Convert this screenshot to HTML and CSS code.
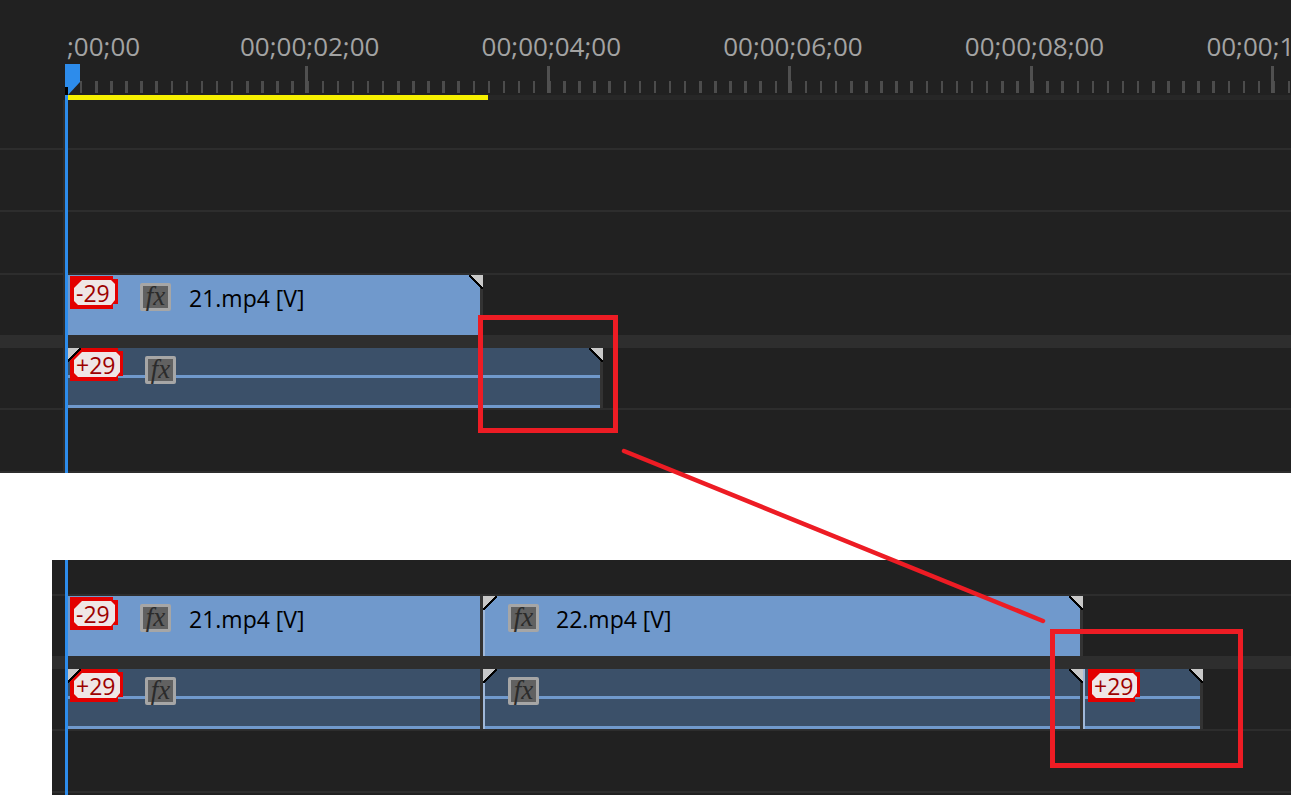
FILE: index.html
```html
<!DOCTYPE html>
<html lang="en">
<head>
  <meta charset="UTF-8">
  <meta name="viewport" content="width=device-width, initial-scale=1.0">
  <title>Timeline</title>
  <link rel="stylesheet" href="styles.css">
</head>
<body>

  <section class="panel panel-top">
    <div class="ruler">
      <div class="labels">
        <span class="label label-first">;00;00</span>
        <span class="label">00;00;02;00</span>
        <span class="label">00;00;04;00</span>
        <span class="label">00;00;06;00</span>
        <span class="label">00;00;08;00</span>
        <span class="label label-last">00;00;1</span>
      </div>
      <div class="ticks"></div>
      <div class="ticks-major"></div>
      <div class="render-band"></div>
      <div class="render-bar"></div>
    </div>

    <div class="track track-a"></div>
    <div class="track track-b"></div>
    <div class="track track-c"></div>

    <div class="clips">
      <div class="clip video w-413">
        <span class="badge badge-minus">-29</span>
        <span class="fx fx-first">fx</span>
        <span class="name">21.mp4 [V]</span>
        <i class="corner right"></i>
      </div>
      <div class="edge"></div>
    </div>
    <div class="divider"></div>
    <div class="clips">
      <div class="clip audio w-533">
        <span class="badge badge-plus">+29</span>
        <span class="fx fx-audio">fx</span>
        <i class="corner left"></i>
        <i class="corner right"></i>
      </div>
      <div class="edge"></div>
    </div>
    <div class="track track-d"></div>

    <div class="gutter"></div>
    <div class="playhead"></div>
    <div class="head"></div>
    <div class="head-tip"></div>
  </section>

  <section class="panel panel-bottom">
    <div class="track track-e"></div>

    <div class="clips">
      <div class="clip video w-413">
        <span class="badge badge-minus">-29</span>
        <span class="fx fx-first">fx</span>
        <span class="name">21.mp4 [V]</span>
      </div>
      <div class="edge"></div>
      <div class="clip video w-597 join">
        <span class="fx fx-second">fx</span>
        <span class="name name-second">22.mp4 [V]</span>
        <i class="corner left"></i>
        <i class="corner right"></i>
      </div>
      <div class="edge"></div>
    </div>
    <div class="divider"></div>
    <div class="clips">
      <div class="clip audio w-413">
        <span class="badge badge-plus">+29</span>
        <span class="fx fx-audio">fx</span>
        <i class="corner left"></i>
      </div>
      <div class="edge"></div>
      <div class="clip audio w-597 join">
        <span class="fx fx-second">fx</span>
        <i class="corner left"></i>
        <i class="corner right"></i>
      </div>
      <div class="edge"></div>
      <div class="clip audio w-117 join">
        <span class="badge badge-plus badge-last">+29</span>
        <i class="corner right"></i>
      </div>
      <div class="edge"></div>
    </div>
    <div class="track track-f"></div>

    <div class="playhead"></div>
  </section>

  <div class="callout callout-top"></div>
  <div class="callout callout-bottom"></div>
  <svg class="pointer" width="1291" height="795" viewBox="0 0 1291 795">
    <line x1="624" y1="451" x2="1043" y2="621" stroke="#ed1c24" stroke-width="4.5" stroke-linecap="round"/>
  </svg>

</body>
</html>
```

FILE: styles.css
```css
body {
  margin: 0;
  width: 1291px;
  height: 795px;
  overflow: hidden;
  position: relative;
  background: #fff;
  font-family: "Open Sans", sans-serif;
}
.panel {
  position: relative;
  overflow: hidden;
  background: #212121;
}
.panel-top {
  height: 473px;
}
.panel-bottom {
  height: 235px;
  margin: 87px 0 0 52px;
}

/* ruler */
.ruler {
  height: 100px;
  position: relative;
  overflow: hidden;
}
.labels {
  display: flex;
  padding: 29px 0 0 67px;
  font-size: 26px;
  line-height: 34px;
  color: #a3a3a3;
  white-space: nowrap;
}
.label {
  flex: 0 0 241.6px;
}
.label-first {
  flex-basis: 173px;
}
.label-last {
  flex-basis: auto;
}
.ticks {
  position: absolute;
  left: 80px;
  right: 0;
  top: 81px;
  height: 12px;
  background: repeating-linear-gradient(90deg, #4c4c4c 0 2.5px, transparent 2.5px 15.1px);
}
.ticks-major {
  position: absolute;
  left: 305px;
  right: 0;
  top: 66px;
  height: 27px;
  background: repeating-linear-gradient(90deg, #505050 0 3px, transparent 3px 241.6px);
}
.render-band {
  position: absolute;
  left: 68px;
  right: 0;
  top: 95px;
  height: 5px;
  background: #272727;
}
.render-bar {
  position: absolute;
  left: 68px;
  top: 95px;
  width: 420px;
  height: 5px;
  background: #f6f000;
}

/* tracks */
.track {
  border-bottom: 2px solid #2d2d2d;
  box-sizing: border-box;
}
.track-a { height: 50px; }
.track-b { height: 62px; }
.track-c { height: 63px; }
.track-d { height: 65px; border-top: 2px solid #2d2d2d; }
.track-e { height: 36px; }
.track-f { height: 64px; border-top: 2px solid #2d2d2d; }

.divider {
  height: 13px;
  background: #2e2e2e;
}
.clips {
  display: flex;
  height: 60px;
  padding-left: 67px;
}
.panel-bottom .clips {
  padding-left: 15px;
}
.clip {
  position: relative;
  display: flex;
  align-items: flex-start;
  box-sizing: border-box;
  height: 60px;
}
.video {
  background: #7099cc;
}
.audio {
  background:
    linear-gradient(#7099cc, #7099cc) 0 27px / 100% 3px no-repeat,
    linear-gradient(#7099cc, #7099cc) 0 57px / 100% 3px no-repeat,
    #3b5069;
}
.join {
  border-left: 2px solid #a0b8d8;
}
.w-413 { width: 413px; }
.w-533 { width: 533px; }
.w-597 { width: 597px; }
.w-117 { width: 117px; }
.edge {
  flex: 0 0 3px;
  background: #333;
}

/* badges on the clips */
.badge {
  position: relative;
  z-index: 0;
  box-sizing: border-box;
  height: 33px;
  margin: 0 0 0 3px;
  padding: 5px 0 0 6px;
  background: #e30000;
  font-size: 23px;
  line-height: 24px;
  color: #9c0000;
  clip-path: polygon(0 0, calc(100% - 5px) 0, calc(100% - 5px) 3px, 100% 3px, 100% calc(100% - 5px), calc(100% - 5px) calc(100% - 5px), calc(100% - 5px) 100%, 0 100%);
}
.badge::before {
  content: "";
  position: absolute;
  z-index: -1;
  left: 4px;
  top: 4px;
  right: 3px;
  bottom: 4px;
  background: #efe6e6;
  clip-path: polygon(8px 0, calc(100% - 4px) 0, 100% 4px, 100% calc(100% - 5px), calc(100% - 4px) 100%, 4px 100%, 0 calc(100% - 4px), 0 8px);
}
.badge-minus {
  width: 48px;
  margin-top: 1px;
}
.badge-plus {
  width: 53px;
}
.badge-last {
  width: 52px;
}
.fx {
  box-sizing: border-box;
  width: 31px;
  height: 28px;
  background: #616161;
  border: 3px solid #a6a6a6;
  border-radius: 2px;
  font-family: "Liberation Serif", serif;
  font-style: italic;
  font-size: 27px;
  line-height: 21px;
  text-align: center;
  color: #2b2b2b;
}
.fx-first {
  margin: 8px 0 0 22px;
}
.fx-audio {
  margin: 8px 0 0 22px;
}
.fx-second {
  margin: 8px 0 0 23px;
}
.name {
  margin: 8px 0 0 18px;
  font-size: 23px;
  line-height: 30px;
  color: #000;
  white-space: nowrap;
}
.name-second {
  margin-left: 17px;
}
.corner {
  position: absolute;
  top: 0;
  width: 14px;
  height: 14px;
}
.corner.right {
  right: -3px;
  background: linear-gradient(to top right, transparent 45%, #000 45% 57%, #c8c8c8 57%);
}
.corner.left {
  left: 0;
  background: linear-gradient(to bottom right, #c8c8c8 43%, #000 43% 55%, transparent 55%);
}
.join .corner.left {
  left: -2px;
}

/* playhead */
.gutter {
  position: absolute;
  left: 63px;
  top: 100px;
  bottom: 0;
  width: 2px;
  background: #2d2d2d;
}
.playhead {
  position: absolute;
  left: 65px;
  top: 87px;
  bottom: 0;
  width: 3px;
  background: #2d8ceb;
}
.panel-bottom .playhead {
  left: 13px;
  top: 0;
}
.head {
  position: absolute;
  left: 65px;
  top: 64px;
  width: 15px;
  height: 31px;
  background: #2d8ceb;
  clip-path: polygon(0 0, 100% 0, 100% 18px, 3px 100%, 0 100%);
}
.head-tip {
  position: absolute;
  left: 65px;
  top: 87px;
  width: 3px;
  height: 8px;
  background: #000;
}

/* red callouts drawn over the screenshot */
.callout {
  position: absolute;
  box-sizing: border-box;
  border: 5px solid #ed1c24;
}
.callout-top {
  left: 478px;
  top: 315px;
  width: 140px;
  height: 118px;
}
.callout-bottom {
  left: 1050px;
  top: 629px;
  width: 193px;
  height: 139px;
}
.pointer {
  position: absolute;
  left: 0;
  top: 0;
}
```
